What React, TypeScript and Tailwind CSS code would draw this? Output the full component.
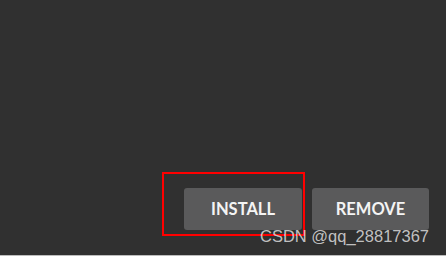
export default function App() {
  return (
    <div className="relative flex h-[256px] w-full flex-col bg-[#303030]">
      <div className="flex flex-1 items-end justify-end gap-[10px] pr-[17px] pb-[25px]">
        <button className="flex h-[42px] w-[118px] items-center justify-center rounded-[3px] bg-[#5a5a5b] text-[16.5px] font-bold text-[#f4f4f4] [font-family:Lato,sans-serif]">
          INSTALL
        </button>
        <button className="flex h-[42px] w-[117px] items-center justify-center rounded-[3px] bg-[#5a5a5b] text-[16.5px] font-bold text-[#f4f4f4] [font-family:Lato,sans-serif]">
          REMOVE
        </button>
      </div>
      <div className="h-px w-full bg-[#bdbdbd]" />

      {/* annotation box */}
      <div className="pointer-events-none absolute left-[162px] top-[172px] h-[64px] w-[143px] border-2 border-[#ff0000]" />

      {/* watermark */}
      <span className="pointer-events-none absolute left-[260px] top-[226px] text-[16.5px] leading-[20px] text-[#d4d4d4]/90 [font-family:'Liberation_Sans',Arial,sans-serif]">
        CSDN @qq_28817367
      </span>
    </div>
  );
}
